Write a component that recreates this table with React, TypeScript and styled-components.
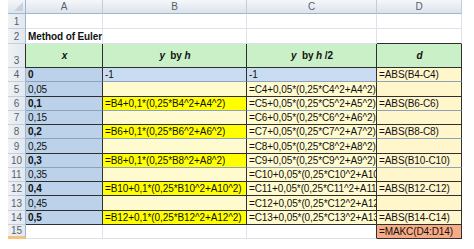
import React from 'react';
import styled, { createGlobalStyle, css } from 'styled-components';

const GlobalStyle = createGlobalStyle`
  html, body {
    margin: 0;
    padding: 0;
    background: #ffffff;
  }
  body {
    font-family: 'Liberation Sans', Arial, sans-serif;
  }
`;

const Page = styled.div`
  width: 474px;
  height: 249px;
  padding-left: 8px;
  box-sizing: border-box;
  overflow: hidden;
  background: #fff;
`;

const Sheet = styled.div`
  display: grid;
  grid-template-columns: 18px 77px 144px 130px 85px;
  grid-template-rows: 14px 15px 15px 24px repeat(12, 14.25px);
  font-size: 10px;
  color: #111;
`;

const Corner = styled.div`
  position: relative;
  background: linear-gradient(#f4f6f9, #dde4ec);
  border-right: 1px solid #9eb6ce;
  border-bottom: 1px solid #9eb6ce;
  box-sizing: border-box;
  &::after {
    content: '';
    position: absolute;
    right: 2px;
    bottom: 2px;
    border-left: 9px solid transparent;
    border-bottom: 9px solid #c9d3de;
  }
`;

const ColHead = styled.div`
  display: flex;
  align-items: center;
  justify-content: center;
  background: linear-gradient(#f5f7fa, #dce3ec);
  border-right: 1px solid #c3ccd8;
  border-bottom: 1px solid #9eb6ce;
  box-sizing: border-box;
  color: #5a5f67;
  font-size: 10px;
`;

const RowHead = styled.div<{ $lit?: boolean }>`
  display: flex;
  align-items: flex-end;
  justify-content: center;
  padding-bottom: 1px;
  background: linear-gradient(90deg, #eef2f6, #e2e8ef);
  border-right: 1px solid #9eb6ce;
  border-bottom: 1px solid #c5cfdb;
  box-sizing: border-box;
  color: #5a5f67;
  font-size: 10px;
  ${p => p.$lit && css`
    border-bottom: 3px solid #f7c27b;
    padding-bottom: 0;
  `}
`;

type Line = 'dark' | 'light' | 'grid';

const lineColor = (l: Line) => (l === 'dark' ? '#2f2f2f' : l === 'light' ? '#8da2bb' : '#dde3ea');

const Cell = styled.div<{
  $bg?: string;
  $bold?: boolean;
  $center?: boolean;
  $bottom: Line;
  $right: Line;
  $left?: boolean;
  $free?: boolean;
}>`
  display: flex;
  align-items: ${p => (p.$center ? 'center' : 'flex-end')};
  justify-content: ${p => (p.$center ? 'center' : 'flex-start')};
  padding: 0 1px 1px 2px;
  box-sizing: border-box;
  background: ${p => p.$bg || 'transparent'};
  border-right: 1px solid ${p => lineColor(p.$right)};
  border-bottom: 1px solid ${p => lineColor(p.$bottom)};
  ${p => p.$left && css`border-left: 1px solid #2f2f2f; margin-left: -1px;`}
  font-weight: ${p => (p.$bold ? 700 : 400)};
  letter-spacing: -0.1px;
  white-space: nowrap;
  overflow: ${p => (p.$free ? 'visible' : 'hidden')};
  line-height: 11px;
`;

const BLUE_A = '#bcd2ea';
const BLUE = '#c9dcf2';
const GREEN = '#c9f0c6';
const PALE = '#fffbcf';
const CREAM = '#fff6cc';
const YELLOW = '#ffff00';
const SALMON = '#f6ab85';

const xs = ['0', '0,05', '0,1', '0,15', '0,2', '0,25', '0,3', '0,35', '0,4', '0,45', '0,5'];

export default function App() {
  const rows = xs.map((x, i) => {
    const r = i + 4;
    const even = i % 2 === 0;
    const bottom: Line = r >= 12 ? 'dark' : even ? 'light' : 'dark';
    let b = '';
    let bBg = PALE;
    if (r === 4) {
      b = '-1';
      bBg = BLUE;
    } else if (even) {
      b = `=B${r - 2}+0,1*(0,25*B${r - 2}^2+A${r - 2}^2)`;
      bBg = YELLOW;
    }
    const c = r === 4 ? '-1' : `=C${r - 1}+0,05*(0,25*C${r - 1}^2+A${r - 1}^2)`;
    const d = even ? `=ABS(B${r}-C${r})` : '';
    return (
      <React.Fragment key={r}>
        <RowHead>{r}</RowHead>
        <Cell $bg={BLUE_A} $bold={even} $bottom={bottom} $right="dark">{x}</Cell>
        <Cell $bg={bBg} $bottom={bottom} $right="dark">{b}</Cell>
        <Cell $bg={r === 4 ? BLUE : PALE} $bottom={bottom} $right="dark">{c}</Cell>
        <Cell $bg={CREAM} $bottom={bottom} $right="dark">{d}</Cell>
      </React.Fragment>
    );
  });

  return (
    <Page>
      <GlobalStyle />
      <Sheet>
        <Corner />
        <ColHead>A</ColHead>
        <ColHead>B</ColHead>
        <ColHead>C</ColHead>
        <ColHead>D</ColHead>

        <RowHead>1</RowHead>
        <Cell $bottom="grid" $right="grid" />
        <Cell $bottom="grid" $right="grid" />
        <Cell $bottom="grid" $right="grid" />
        <Cell $bottom="grid" $right="grid" />

        <RowHead>2</RowHead>
        <Cell $bold $free $bottom="grid" $right="grid">Method of Euler</Cell>
        <Cell $bottom="grid" $right="grid" />
        <Cell $bottom="grid" $right="grid" />
        <Cell $bottom="dark" $right="grid" />

        <RowHead>3</RowHead>
        <Cell $bg={GREEN} $bold $center $bottom="dark" $right="dark" $left>
          <i>x</i>
        </Cell>
        <Cell $bg={GREEN} $bold $center $bottom="dark" $right="dark">
          <i>y</i>&nbsp;&nbsp;by&nbsp;<i>h</i>
        </Cell>
        <Cell $bg={GREEN} $bold $center $bottom="dark" $right="dark">
          <i>y</i>&nbsp;&nbsp;by&nbsp;<i>h</i>&nbsp;/2
        </Cell>
        <Cell $bg={GREEN} $bold $center $bottom="dark" $right="dark">
          <i>d</i>
        </Cell>

        {rows}

        <RowHead $lit>15</RowHead>
        <Cell $bottom="grid" $right="grid" />
        <Cell $bottom="grid" $right="grid" />
        <Cell $bottom="grid" $right="dark" />
        <Cell $bg={SALMON} $bottom="dark" $right="dark">=MAKC(D4:D14)</Cell>
      </Sheet>
    </Page>
  );
}
